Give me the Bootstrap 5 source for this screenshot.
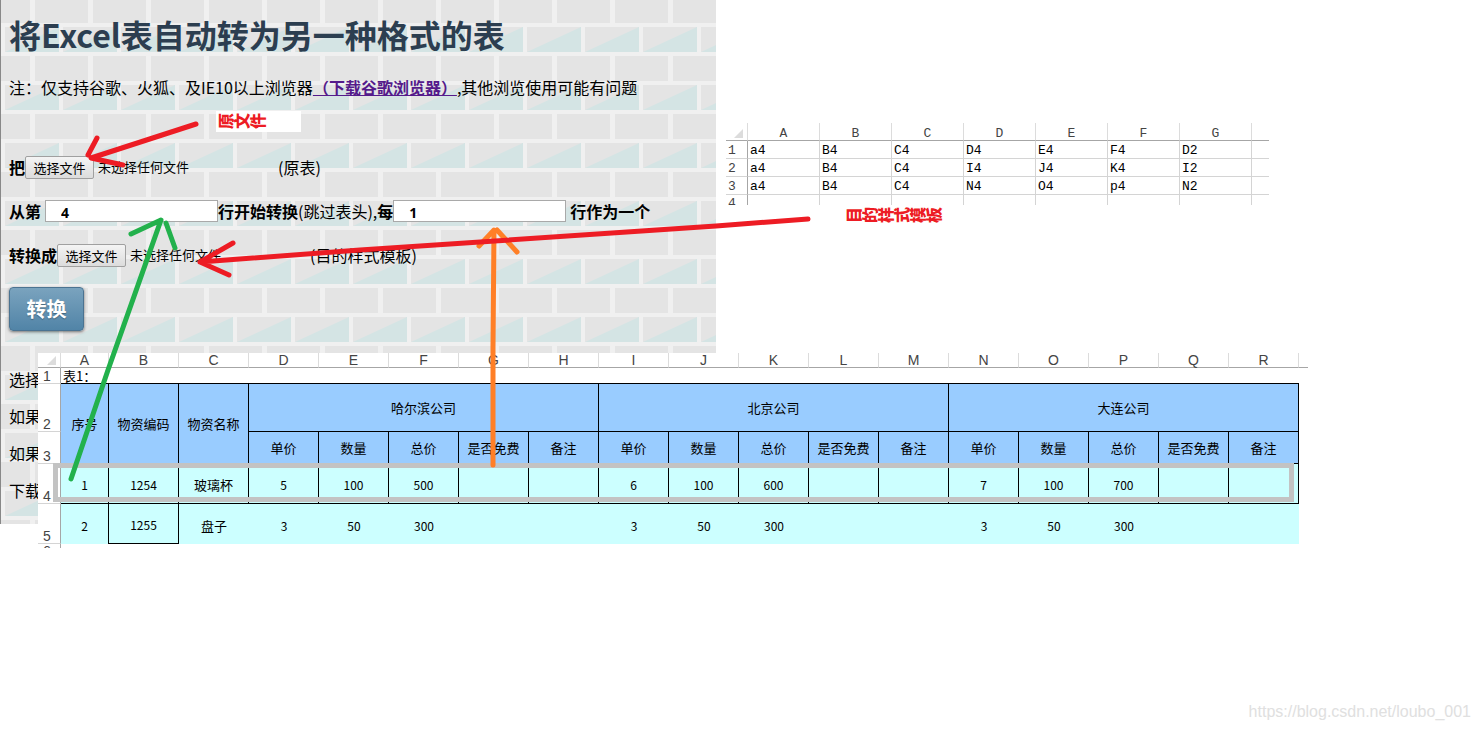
<!DOCTYPE html>
<html lang="zh-CN">
<head>
<meta charset="utf-8">
<meta name="viewport" content="width=device-width, initial-scale=1">
<title>将Excel表自动转为另一种格式的表</title>
<link href="https://cdn.jsdelivr.net/npm/bootstrap@5.3.0/dist/css/bootstrap.min.css" rel="stylesheet">
<style>
body { font-family: "Noto Sans CJK SC", sans-serif; color: #000; background: #fff; font-size: 16px; line-height: 24px; }
.stage { overflow: hidden; }
.converter {
  flex: 0 0 716px; padding: 12px 8px 22px; border-left: 1px solid #888;
  background: #f0f0f0 url("data:image/svg+xml,%3Csvg xmlns='http://www.w3.org/2000/svg' width='58' height='58'%3E%3Cpath fill='%23e4e4e4' d='M0 0h30v23H0zM35 0h23v23H35zM0 27h1v25H0zM5 27h53v25H5zM0 56h30v2H0zM35 56h23v2H35z'/%3E%3Cpath fill='%23d4e4e4' d='M5 52L58 27.500V52zM0 27h1v25H0z'/%3E%3C/svg%3E") -1px 0;
}
.converter h1 { font-size: 32px; line-height: 44px; font-weight: 700; color: #2c3e50; margin: 0 0 19px; }
.converter a { color: #551a8b; font-weight: 700; }
.note { margin: 0 0 56px; }
.field-line { height: 24px; margin-bottom: 20px; }
.file-pick { width: 253px; font-size: 13px; }
.file-pick button { width: 69px; height: 23px; font-size: 13px; line-height: 19px; padding: 0; color: #000; border: 1px solid #a0a0a0; border-radius: 2px; background: linear-gradient(#f4f4f4, #dcdcdc); }
.num { width: 173px; height: 22px; border: 1px solid #a9a9a9; padding: 3px 15px 0; background: #fff; font: bold 14px "Noto Sans", sans-serif; line-height: 17px; color: #000; }
.go { width: 75px; height: 44px; padding: 0; border: 1px solid #4b7391; border-radius: 4px; font-size: 20px; font-weight: 700; color: #fff; background: linear-gradient(#7aa3be, #5184a7); box-shadow: 0 1px 3px rgba(0,0,0,.5); text-shadow: 0 1px 1px rgba(0,0,0,.3); }
.help { margin-top: 36px; gap: 13px; }
.template-side { padding: 123px 0 0 10px; }
.xl { border-collapse: separate; border-spacing: 0; table-layout: fixed; background: #fff; }
.xl th, .xl td { padding: 0; font-weight: 400; white-space: nowrap; }
.corner::after { content: ""; display: block; width: 9px; height: 9px; margin: 0 4px 2px auto; background: #dcdcdc; clip-path: polygon(100% 0, 100% 100%, 0 100%); }
.xl thead th { vertical-align: bottom; text-align: center; color: #444; border-bottom: 1px solid #a6a6a6; border-right: 1px solid #dcdcdc; }
.xl thead th:last-child { border-right: 0; }
.small-xl { width: 543px; font: 13px "Liberation Mono", monospace; line-height: 14px; }
.small-xl td, .small-xl tbody th { height: 18px; border-right: 1px solid #d4d4d4; border-bottom: 1px solid #d4d4d4; padding-left: 2px; vertical-align: bottom; }
.small-xl td:last-child { border-right: 0; }
.small-xl tbody th { color: #444; border-right-color: #a6a6a6; border-bottom-color: #d4d4d4; }
.small-xl thead th { height: 18px; line-height: 13px; }
.small-xl .cut td, .small-xl .cut th { height: 10px; border-bottom: 0; }
.peek { overflow: hidden; line-height: 18px; }
.small-xl .peek { height: 10px; }
.big-xl .peek { height: 4px; line-height: 14px; }
.big-wrap { margin: -171px 0 0 38px; width: 1270px; }
.big-xl { width: 1270px; font: 12px "Noto Sans CJK SC", sans-serif; line-height: 15px; text-align: center; }
.big-xl .zh td, .big-xl td.zh { font: 13px "Noto Sans CJK SC", sans-serif; line-height: 15px; }
.big-xl thead th, .big-xl tbody th { font: 14px "Liberation Sans", sans-serif; color: #444; line-height: 14px; }
.big-xl thead th { height: 15px; }
.big-xl tbody th { vertical-align: bottom; text-align: center; padding-right: 4px; padding-left: 0; border-right: 1px solid #a6a6a6; border-bottom: 1px solid #d4d4d4; }
.big-xl tbody th.peekcell { border-bottom: 0; }
.big-xl .title-row td { height: 16px; text-align: left; padding-left: 2px; border-bottom: 1px solid #000; line-height: 15px; }
.big-xl tbody tr td.blank { border: 0; background: #fff; }
.big-xl .head td { background: #99ccff; border-right: 1px solid #000; border-bottom: 1px solid #000; }
.big-xl .data td { height: 40px; background: #ccffff; padding-top: 2px; }
.big-xl .ruled td { border-right: 1px solid #000; border-bottom: 1px solid #000; }
.big-xl td.boxed { border-right: 1px solid #000; border-bottom: 1px solid #000; }
.big-xl td.edge { border-right: 1px solid #000; }
.tag { font-weight: 900; font-size: 16px; line-height: 20px; color: #ed1c24; }
.tag span { display: inline-block; width: 16px; line-height: 16px; text-align: center; transform: rotate(-90deg); }
.tag-source { left: 216px; top: 111px; width: 85px; height: 21px; background: #fff; padding-left: 1px; }
.tag-template { margin-left: 119px; }
.marks { left: 0; top: 0; pointer-events: none; fill: none; stroke-width: 5; stroke-linecap: round; stroke-linejoin: round; }
.credit { font: 16px "Liberation Sans", sans-serif; line-height: 20px; color: #e0e0e0; padding: 0 7px 8px 0; }
</style>
<script src="https://cdn.jsdelivr.net/npm/bootstrap@5.3.0/dist/js/bootstrap.bundle.min.js"></script>
</head>
<body>
<div class="stage position-relative d-flex flex-column min-vh-100">
  <main>
    <div class="d-flex align-items-start">
      <form class="converter">
        <h1>将Excel表自动转为另一种格式的表</h1>
        <p class="note">注：仅支持谷歌、火狐、及IE10以上浏览器<a href="#">（下载谷歌浏览器）</a>,其他浏览使用可能有问题</p>
        <div class="field-line d-flex align-items-center">
          <label class="fw-bold" for="src">把</label>
          <div class="file-pick d-flex align-items-center"><button type="button" id="src">选择文件</button><span class="ms-1">未选择任何文件</span></div>
          <span>(原表)</span>
        </div>
        <div class="field-line d-flex align-items-center">
          <label class="fw-bold me-1" for="start">从第</label>
          <input class="num" id="start" type="text" value="4">
          <label for="step"><b>行开始转换</b>(跳过表头),<b>每</b></label>
          <input class="num" id="step" type="text" value="1">
          <b class="ms-1">行作为一个</b>
        </div>
        <div class="field-line d-flex align-items-center">
          <label class="fw-bold" for="dst">转换成</label>
          <div class="file-pick d-flex align-items-center"><button type="button" id="dst">选择文件</button><span class="ms-1">未选择任何文件</span></div>
          <span>(目的样式模板)</span>
        </div>
        <button class="go d-block" type="button">转换</button>
        <div class="help d-flex flex-column"><div>选择</div><div>如果</div><div>如果</div><div>下载</div></div>
      </form>
      <section class="template-side">
        <table class="xl small-xl">
          <colgroup><col style="width:22px"><col span="7" style="width:72px"><col></colgroup>
          <thead><tr><th class="corner"></th><th>A</th><th>B</th><th>C</th><th>D</th><th>E</th><th>F</th><th>G</th><th></th></tr></thead>
          <tbody>
            <tr><th>1</th><td>a4</td><td>B4</td><td>C4</td><td>D4</td><td>E4</td><td>F4</td><td>D2</td><td></td></tr>
            <tr><th>2</th><td>a4</td><td>B4</td><td>C4</td><td>I4</td><td>J4</td><td>K4</td><td>I2</td><td></td></tr>
            <tr><th>3</th><td>a4</td><td>B4</td><td>C4</td><td>N4</td><td>O4</td><td>p4</td><td>N2</td><td></td></tr>
            <tr class="cut"><th><div class="peek">4</div></th><td></td><td></td><td></td><td></td><td></td><td></td><td></td><td></td></tr>
          </tbody>
        </table>
        <div class="tag tag-template"><span>目</span><span>的</span><span>样</span><span>式</span><span>模</span><span>板</span></div>
      </section>
    </div>
    <section class="big-wrap position-relative">
      <table class="xl big-xl">
        <colgroup><col style="width:23px"><col style="width:48px"><col span="17" style="width:70px"><col></colgroup>
        <thead><tr><th class="corner"></th><th>A</th><th>B</th><th>C</th><th>D</th><th>E</th><th>F</th><th>G</th><th>H</th><th>I</th><th>J</th><th>K</th><th>L</th><th>M</th><th>N</th><th>O</th><th>P</th><th>Q</th><th>R</th><th></th></tr></thead>
        <tbody>
          <tr class="title-row zh"><th>1</th><td colspan="18">表1：</td><td class="blank"></td></tr>
          <tr class="head zh" style="height:48px"><th>2</th><td rowspan="2">序号</td><td rowspan="2">物资编码</td><td rowspan="2">物资名称</td><td colspan="5">哈尔滨公司</td><td colspan="5">北京公司</td><td colspan="5">大连公司</td><td class="blank"></td></tr>
          <tr class="head zh" style="height:32px"><th>3</th><td>单价</td><td>数量</td><td>总价</td><td>是否免费</td><td>备注</td><td>单价</td><td>数量</td><td>总价</td><td>是否免费</td><td>备注</td><td>单价</td><td>数量</td><td>总价</td><td>是否免费</td><td>备注</td><td class="blank"></td></tr>
          <tr class="data ruled"><th>4</th><td>1</td><td>1254</td><td class="zh">玻璃杯</td><td>5</td><td>100</td><td>500</td><td></td><td></td><td>6</td><td>100</td><td>600</td><td></td><td></td><td>7</td><td>100</td><td>700</td><td></td><td></td><td class="blank"></td></tr>
          <tr class="data"><th>5</th><td class="edge">2</td><td class="boxed">1255</td><td class="zh">盘子</td><td>3</td><td>50</td><td>300</td><td></td><td></td><td>3</td><td>50</td><td>300</td><td></td><td></td><td>3</td><td>50</td><td>300</td><td></td><td></td><td class="blank"></td></tr>
          <tr><th class="peekcell"><div class="peek">6</div></th><td colspan="19"></td></tr>
        </tbody>
      </table>
    </section>
  </main>
  <footer class="credit mt-auto text-end">https://blog.csdn.net/loubo_001</footer>

  <div class="tag tag-source position-absolute"><span>原</span><span>文</span><span>件</span></div>
  <svg class="marks position-absolute" width="1310" height="550" viewBox="0 0 1310 550" aria-hidden="true">
    <path stroke="#c3c3c3" style="stroke-linejoin:miter" d="M55.500 465.500H1291.500V499.500H55.500z"/>
    <g stroke="#22b14c"><path d="M71 479L108 370L161 220L131 234M166 223L175 248"/></g>
    <g stroke="#ff7f27"><path d="M493 465V347L494 230L479 246M497 230L517 252"/></g>
    <g stroke="#ed1c24"><path d="M196 124L91 158L123 165M97 138L88 155"/><path d="M808 219L716 226L360 250L200 262L233 243M200 262L229 275"/></g>
  </svg>
</div>
</body>
</html>
